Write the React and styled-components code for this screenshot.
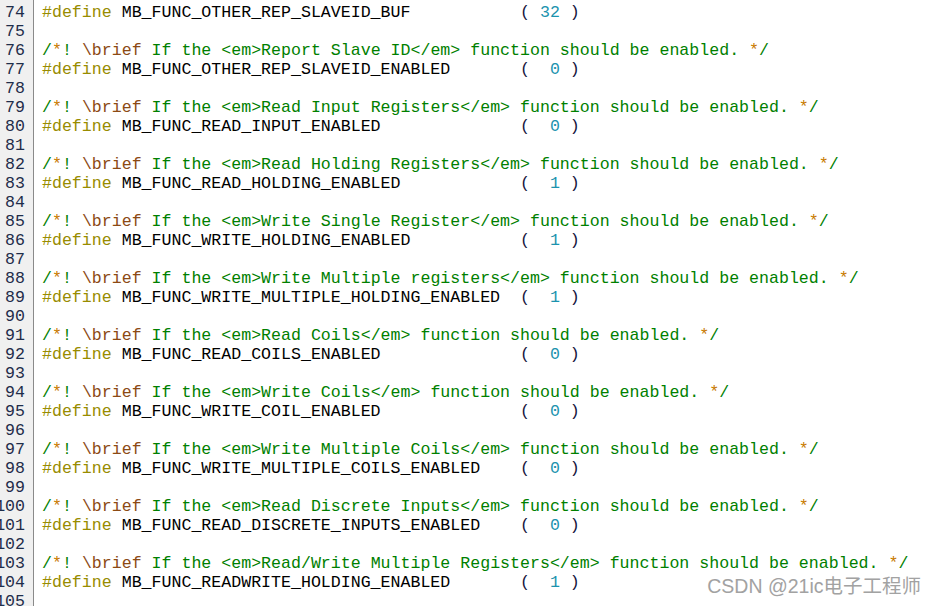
import React from 'react';
import styled, { createGlobalStyle } from 'styled-components';

const GlobalStyle = createGlobalStyle`
    html, body {
        margin: 0;
        padding: 0;
        background: #ffffff;
        overflow: hidden;
    }
`;

const Editor = styled.div`
    position: relative;
    height: 606px;
    overflow: hidden;
    padding-top: 3px;
    box-sizing: border-box;
    background: linear-gradient(to right, #f0f0f0 0, #f0f0f0 33px, #8a8a8a 33px, #8a8a8a 34px, #ffffff 34px);
    font-family: "Liberation Mono", "Courier New", monospace;
    font-size: 16.6px;
`;

const Row = styled.div`
    display: flex;
    height: 19px;
    line-height: 19px;
`;

const LineNo = styled.div`
    width: 25px;
    margin-right: 17px;
    display: flex;
    justify-content: flex-end;
    overflow: hidden;
    color: #1f2d4a;
    white-space: pre;
`;

const Code = styled.div`
    white-space: pre;
    color: #000000;
`;

const Tok = styled.span`
    color: ${({ c }) => c};
`;

const Watermark = styled.div`
    position: absolute;
    right: 15px;
    bottom: 7px;
    font-family: "Liberation Sans", "Noto Sans CJK SC", sans-serif;
    font-size: 19.5px;
    color: #a2a2a2;
    text-shadow: 0 0 3px #ffffff, 0 0 3px #ffffff;
    white-space: nowrap;
`;

const GREEN = '#008000';
const STAR = '#c87a00';
const BRIEF = '#8c4a14';
const DEFINE = '#988c00';
const NUM = '#1b93ae';
const PAREN = '#14143c';

const lines = [
    { n: 74, def: 'MB_FUNC_OTHER_REP_SLAVEID_BUF', val: 32 },
    { n: 75 },
    { n: 76, doc: 'Report Slave ID' },
    { n: 77, def: 'MB_FUNC_OTHER_REP_SLAVEID_ENABLED', val: 0 },
    { n: 78 },
    { n: 79, doc: 'Read Input Registers' },
    { n: 80, def: 'MB_FUNC_READ_INPUT_ENABLED', val: 0 },
    { n: 81 },
    { n: 82, doc: 'Read Holding Registers' },
    { n: 83, def: 'MB_FUNC_READ_HOLDING_ENABLED', val: 1 },
    { n: 84 },
    { n: 85, doc: 'Write Single Register' },
    { n: 86, def: 'MB_FUNC_WRITE_HOLDING_ENABLED', val: 1 },
    { n: 87 },
    { n: 88, doc: 'Write Multiple registers' },
    { n: 89, def: 'MB_FUNC_WRITE_MULTIPLE_HOLDING_ENABLED', val: 1 },
    { n: 90 },
    { n: 91, doc: 'Read Coils' },
    { n: 92, def: 'MB_FUNC_READ_COILS_ENABLED', val: 0 },
    { n: 93 },
    { n: 94, doc: 'Write Coils' },
    { n: 95, def: 'MB_FUNC_WRITE_COIL_ENABLED', val: 0 },
    { n: 96 },
    { n: 97, doc: 'Write Multiple Coils' },
    { n: 98, def: 'MB_FUNC_WRITE_MULTIPLE_COILS_ENABLED', val: 0 },
    { n: 99 },
    { n: 100, doc: 'Read Discrete Inputs' },
    { n: 101, def: 'MB_FUNC_READ_DISCRETE_INPUTS_ENABLED', val: 0 },
    { n: 102 },
    { n: 103, doc: 'Read/Write Multiple Registers' },
    { n: 104, def: 'MB_FUNC_READWRITE_HOLDING_ENABLED', val: 1 },
    { n: 105 },
];

function DocComment({ text }) {
    return (
        <>
            <Tok c={GREEN}>/</Tok>
            <Tok c={STAR}>*</Tok>
            <Tok c={GREEN}>!</Tok>
            {' '}
            <Tok c={BRIEF}>\brief</Tok>
            <Tok c={GREEN}>{` If the <em>${text}</em> function should be enabled. `}</Tok>
            <Tok c={STAR}>*</Tok>
            <Tok c={GREEN}>/</Tok>
        </>
    );
}

function Define({ name, val }) {
    // values line up at column 48
    const pad = ' '.repeat(Math.max(2, 48 - 8 - name.length));
    return (
        <>
            <Tok c={DEFINE}>#define</Tok>
            {' ' + name + pad}
            <Tok c={PAREN}>(</Tok>
            {' '}
            <Tok c={NUM}>{String(val).padStart(2, ' ')}</Tok>
            {' '}
            <Tok c={PAREN}>)</Tok>
        </>
    );
}

export default function App() {
    return (
        <>
            <GlobalStyle />
            <Editor>
                {lines.map((line) => (
                    <Row key={line.n}>
                        <LineNo><span>{line.n}</span></LineNo>
                        <Code>
                            {line.doc && <DocComment text={line.doc} />}
                            {line.def && <Define name={line.def} val={line.val} />}
                        </Code>
                    </Row>
                ))}
                <Watermark>CSDN @21ic电子工程师</Watermark>
            </Editor>
        </>
    );
}
